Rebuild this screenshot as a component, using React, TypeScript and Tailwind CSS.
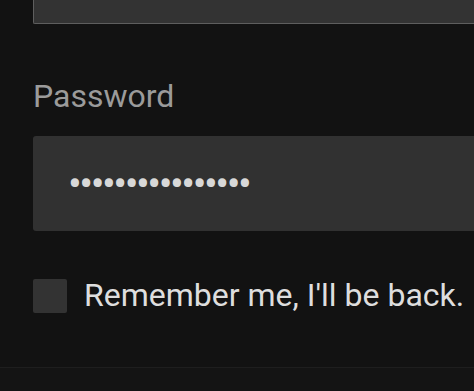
import React from "react";

export default function App() {
  return (
    <div
      className="w-[474px] h-[391px] overflow-hidden bg-[#121212] flex flex-col"
      style={{ fontFamily: "Roboto, 'Noto Sans', sans-serif" }}
    >
      <div className="pl-[33px] flex flex-col">
        <div className="h-[24px] w-[470px] bg-[#333333] border-l border-b border-[#5e5e5e] rounded-bl-[2px]" />
        <label className="mt-[53px] text-[32px] leading-[38px] text-[#9b9b9b]">Password</label>
        <div className="mt-[21px] h-[95px] w-[470px] bg-[#313131] rounded-[3px] flex items-center pl-[35px]">
          <span className="text-[41px] leading-[44px] text-[#d8d8d8] tracking-[-2.5px]">
            ••••••••••••••••
          </span>
        </div>
        <div className="mt-[45px] flex items-start gap-[17px]">
          <div className="mt-[3px] w-[34px] h-[34px] rounded-[2px] bg-[#333333]" />
          <span className="text-[32px] leading-[38px] text-[#dedede]">Remember me, I'll be back.</span>
        </div>
      </div>
      <div className="mt-auto h-[24px] border-t border-[#1e1e1e] bg-[#141414]" />
    </div>
  );
}
